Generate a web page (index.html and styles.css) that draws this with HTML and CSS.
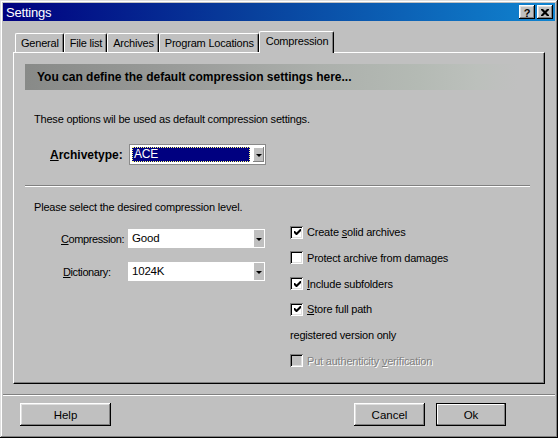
FILE: index.html
```html
<!DOCTYPE html>
<html>
<head>
<meta charset="utf-8">
<title>Settings</title>
<link rel="stylesheet" href="styles.css">
</head>
<body>
<div class="window">
  <div class="titlebar">
    <span class="title">Settings</span>
    <div class="tbtns">
      <span class="tbtn help">?</span>
      <span class="tbtn">
        <svg width="8" height="7" viewBox="0 0 8 7"><path d="M0 0h2l2 2 2-2h2v1L5.5 3.5 8 6v1H6L4 5 2 7H0V6l2.5-2.5L0 1z" fill="#000"/></svg>
      </span>
    </div>
  </div>
  <div class="content">
    <div class="tabs">
      <div class="tab">General</div>
      <div class="tab">File list</div>
      <div class="tab">Archives</div>
      <div class="tab">Program Locations</div>
      <div class="tab active">Compression</div>
    </div>
    <div class="panel">
      <div class="banner">You can define the default compression settings here...</div>
      <p class="line first">These options wil be used as default compression settings.</p>
      <div class="archrow">
        <span class="blabel"><u>A</u>rchivetype:</span>
        <div class="combo focus">
          <span class="field">ACE</span>
          <span class="arrow raised"><span class="tri"></span></span>
        </div>
      </div>
      <div class="sep inner"></div>
      <p class="line second">Please select the desired compression level.</p>
      <div class="cols">
        <div class="left">
          <div class="frow r1">
            <span class="flabel l1"><u>C</u>ompression:</span>
            <div class="combo flat">
              <span class="field">Good</span>
              <span class="arrow"><span class="tri"></span></span>
            </div>
          </div>
          <div class="frow r2">
            <span class="flabel l2"><u>D</u>ictionary:</span>
            <div class="combo flat">
              <span class="field">1024K</span>
              <span class="arrow"><span class="tri"></span></span>
            </div>
          </div>
        </div>
        <div class="right">
          <div class="cb"><span class="box checked"><svg width="7" height="7" viewBox="0 0 7 7"><path d="M6 0h1v2L3 6H2L0 4V2h1l1.5 1.5z" fill="#000"/></svg></span><span>Create <u>s</u>olid archives</span></div>
          <div class="cb"><span class="box"></span><span>Protect archive from damages</span></div>
          <div class="cb"><span class="box checked"><svg width="7" height="7" viewBox="0 0 7 7"><path d="M6 0h1v2L3 6H2L0 4V2h1l1.5 1.5z" fill="#000"/></svg></span><span><u>I</u>nclude subfolders</span></div>
          <div class="cb"><span class="box checked"><svg width="7" height="7" viewBox="0 0 7 7"><path d="M6 0h1v2L3 6H2L0 4V2h1l1.5 1.5z" fill="#000"/></svg></span><span><u>S</u>tore full path</span></div>
          <div class="note">registered version only</div>
          <div class="cb disabled"><span class="box"></span><span>Put authenticity <u>v</u>erification</span></div>
        </div>
      </div>
    </div>
  </div>
  <div class="sep full"></div>
  <div class="buttons">
    <button class="btn help-btn">Help</button>
    <div class="spacer"></div>
    <button class="btn cancel">Cancel</button>
    <button class="btn ok">Ok</button>
  </div>
</div>
</body>
</html>
```

FILE: styles.css
```css
* { box-sizing: border-box; }
html, body { margin: 0; padding: 0; background: #c0c0c0; }
body {
  font-family: "Liberation Sans", Arial, sans-serif;
  font-size: 11px;
  letter-spacing: -0.2px;
  color: #000;
}
u { text-decoration: underline; text-underline-offset: 1px; }

.window {
  width: 558px;
  height: 438px;
  padding: 3px;
  background: #c0c0c0;
  box-shadow: inset -1px -1px #000, inset 1px 1px #dfdfdf, inset -2px -2px #808080, inset 2px 2px #fff;
}

.titlebar {
  height: 18px;
  display: flex;
  align-items: center;
  justify-content: space-between;
  background: linear-gradient(90deg, #000080 0%, #08409c 45%, #1084d0 100%);
  padding: 0 2px 0 3px;
}
.title {
  color: #fff;
  font-size: 13px;
  letter-spacing: -0.2px;
}
.tbtns { display: flex; gap: 2px; }
.tbtn {
  width: 16px;
  height: 14px;
  background: #c0c0c0;
  display: flex;
  align-items: center;
  justify-content: center;
  box-shadow: inset -1px -1px #000, inset 1px 1px #fff, inset -2px -2px #808080, inset 2px 2px #dfdfdf;
}
.tbtn.help {
  font-weight: bold;
  font-size: 11px;
  letter-spacing: 0;
  line-height: 14px;
  padding-top: 1px;
}

.content { padding: 10px 10px 0; }

.tabs {
  display: flex;
  align-items: flex-end;
  height: 21px;
  padding-left: 2px;
  position: relative;
  z-index: 2;
}
.tab {
  height: 19px;
  padding: 2px 4px 0 5px;
  line-height: 15px;
  border-top: 1px solid #fff;
  border-left: 1px solid #fff;
  border-right: 1px solid #000;
  border-radius: 2px 2px 0 0;
  box-shadow: inset -1px 0 #808080;
  background: #c0c0c0;
}
.tab.active {
  height: 22px;
  margin-bottom: -1px;
  padding: 2px 5px 0 6px;
  line-height: 15px;
}

.panel {
  height: 332px;
  border-top: 1px solid #fff;
  border-left: 1px solid #fff;
  border-right: 1px solid #000;
  border-bottom: 1px solid #000;
  box-shadow: inset -1px -1px #808080;
  padding: 11px 0 0 11px;
  position: relative;
  z-index: 1;
}

.banner {
  width: 492px;
  height: 26px;
  padding-left: 12px;
  line-height: 26px;
  font-weight: bold;
  font-size: 12px;
  letter-spacing: 0;
  background: linear-gradient(90deg, #888a88 0%, #9c9e9c 35%, #acb0ac 60%, #b4bab4 80%, #bcc0bc 92%, #c0c0c0 100%);
}

.line {
  margin: 0;
  line-height: 14px;
  padding-left: 9px;
}
.line.first { margin-top: 22px; }
.line.second { margin-top: 13px; }

.archrow {
  margin-top: 18px;
  display: flex;
  align-items: center;
  padding-left: 25px;
}
.blabel {
  width: 79px;
  font-weight: bold;
  font-size: 12px;
  letter-spacing: 0;
}

.combo {
  display: flex;
  width: 137px;
  background: #fff;
}
.combo.focus {
  height: 21px;
  border: 1px solid #8a8a8a;
  padding: 2px 1px 2px 2px;
}
.combo.focus .field {
  flex: 1;
  background: #000080;
  color: #fff;
  outline: 1px dotted #ffff80;
  outline-offset: -1px;
  line-height: 15px;
  padding-left: 2px;
  font-size: 12px;
}
.combo.focus .arrow {
  width: 11px;
  margin-left: 3px;
}
.combo.flat {
  height: 19px;
  padding: 1px;
}
.combo.flat .field {
  flex: 1;
  line-height: 17px;
  padding-left: 3px;
  font-size: 11.5px;
}
.arrow {
  width: 10px;
  background: #c0c0c0;
  display: flex;
  align-items: center;
  justify-content: center;
}
.arrow.raised {
  box-shadow: inset -1px -1px #808080, inset 1px 1px #fff;
}
.tri {
  width: 0;
  height: 0;
  border-left: 3px solid transparent;
  border-right: 3px solid transparent;
  border-top: 3px solid #000;
  margin-top: 1px;
}

.sep {
  border-top: 1px solid #808080;
  border-bottom: 1px solid #fff;
  height: 2px;
}
.sep.inner {
  width: 505px;
  margin-top: 20px;
}
.sep.full {
  margin-top: 10px;
}

.cols {
  display: flex;
  margin-top: 11px;
}
.left { width: 265px; }
.frow {
  display: flex;
  align-items: center;
}
.frow.r1 { margin-top: 4px; }
.frow.r2 { margin-top: 14px; }
.flabel { letter-spacing: -0.4px; }
.flabel.l1 { padding-left: 36px; width: 103px; }
.flabel.l2 { padding-left: 38px; width: 103px; }

.right {
  display: flex;
  flex-direction: column;
  gap: 11.8px;
}
.cb, .note {
  display: flex;
  align-items: center;
  height: 14px;
  gap: 4px;
}
.box {
  width: 13px;
  height: 13px;
  background: #fff;
  box-shadow: inset 1px 1px #808080, inset -1px -1px #fff, inset 2px 2px #000, inset -2px -2px #dfdfdf;
  display: flex;
  align-items: center;
  justify-content: center;
  padding: 1px 0 0 1px;
}
.cb.disabled { color: #808080; text-shadow: 1px 1px #fff; }
.cb.disabled .box { background: #c0c0c0; }

.buttons {
  display: flex;
  margin-top: 7px;
  padding: 0 49px 0 17px;
}
.spacer { flex: 1; }
.btn {
  height: 23px;
  font-family: "Liberation Sans", Arial, sans-serif;
  font-size: 11.5px;
  color: #000;
  background: #c0c0c0;
  border: 0;
  padding: 0;
  box-shadow: inset -1px -1px #000, inset 1px 1px #fff, inset -2px -2px #808080, inset 2px 2px #dfdfdf;
}
.help-btn { width: 91px; }
.cancel { width: 71px; margin-right: 11px; }
.ok {
  width: 70px;
  border: 1px solid #000;
  box-shadow: inset -1px -1px #808080, inset 1px 1px #fff;
}
```
